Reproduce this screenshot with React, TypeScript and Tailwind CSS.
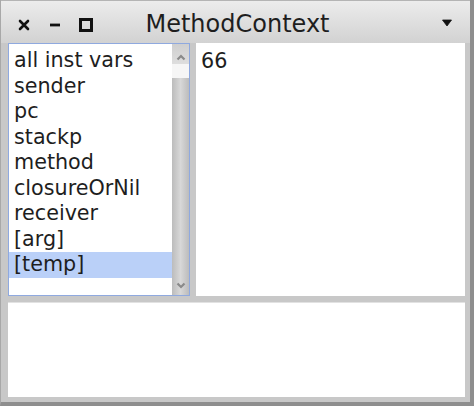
import React from 'react';

const fields = [
  'all inst vars',
  'sender',
  'pc',
  'stackp',
  'method',
  'closureOrNil',
  'receiver',
  '[arg]',
  '[temp]',
];

const font = { fontFamily: '"DejaVu Sans", "Liberation Sans", sans-serif' };

function TitleBar() {
  return (
    <div className="grid h-[43px] grid-cols-[112px_1fr_108px] items-center border-t border-[#b4b4b4] bg-gradient-to-b from-[#ececec] to-[#d2d2d2]">
      <div className="flex items-center pt-[6px]">
        {/* close */}
        <svg className="ml-[17px]" width="12" height="12" viewBox="0 0 12 12">
          <path d="M2 2L10 10M10 2L2 10" stroke="#111" strokeWidth="2.6" strokeLinecap="round" />
        </svg>
        {/* collapse */}
        <svg className="ml-[19px]" width="12" height="12" viewBox="0 0 12 12">
          <path d="M1 6H11" stroke="#111" strokeWidth="2.8" />
        </svg>
        {/* expand */}
        <svg className="ml-[18px] -mt-[1px]" width="14" height="14" viewBox="0 0 14 14">
          <rect x="1.5" y="1.5" width="11" height="11" fill="none" stroke="#111" strokeWidth="3" />
        </svg>
      </div>
      <div className="pt-[3px] text-center text-[24px] leading-none text-[#1e1e1e]" style={font}>
        MethodContext
      </div>
      <div className="flex items-center pt-[1px]">
        <svg className="ml-[80px]" width="10" height="8" viewBox="0 0 10 8">
          <path d="M0.5 1H9.5L5 7Z" fill="#111" stroke="#111" strokeWidth="0.8" strokeLinejoin="round" />
        </svg>
      </div>
    </div>
  );
}

function ScrollBar() {
  return (
    <div className="flex w-[17px] flex-col">
      <div className="flex h-[20px] items-end justify-center bg-gradient-to-b from-[#cfcfcf] to-[#dedede] pb-[3px]">
        <svg width="10" height="7" viewBox="0 0 10 7">
          <path d="M1.5 5.5L5 2L8.5 5.5" fill="none" stroke="#8a8a8a" strokeWidth="2.2" />
        </svg>
      </div>
      <div className="h-[14px] bg-[#f6f6f6]" />
      <div className="flex flex-1 items-end justify-center bg-gradient-to-r from-[#bcbcbc] via-[#d8d8d8] to-[#bcbcbc] pb-[6px]">
        <svg width="10" height="7" viewBox="0 0 10 7">
          <path d="M1.5 1.5L5 5L8.5 1.5" fill="none" stroke="#8a8a8a" strokeWidth="2.2" />
        </svg>
      </div>
    </div>
  );
}

export default function App() {
  return (
    <div
      className="flex h-[406px] w-[474px] flex-col border-b-4 border-l border-r-4 border-[#8e8e8e] border-l-[#a8a8a8] bg-[#c8c8c8]"
      style={font}
    >
      <TitleBar />
      <div className="flex flex-1 flex-col gap-[6px] pb-[5px] pl-[7px] pr-[5px]">
        <div className="flex h-[253px] gap-[6px]">
          <div className="flex w-[182px] border border-[#8fa9df] bg-white">
            <div className="flex-1 pt-[4px]">
              {fields.map((f) => (
                <div
                  key={f}
                  className={`h-[25.5px] pl-[5px] text-[20.7px] leading-[25.5px] text-[#1e1e1e] ${
                    f === '[temp]' ? 'bg-[#bad0f8]' : ''
                  }`}
                >
                  {f}
                </div>
              ))}
            </div>
            <ScrollBar />
          </div>
          <div className="flex-1 bg-white pl-[5px] pt-[6px] text-[20.7px] leading-[25.5px] text-[#1e1e1e]">66</div>
        </div>
        <div className="flex-1 border-t border-[#e2e2e2] bg-white" />
      </div>
    </div>
  );
}
